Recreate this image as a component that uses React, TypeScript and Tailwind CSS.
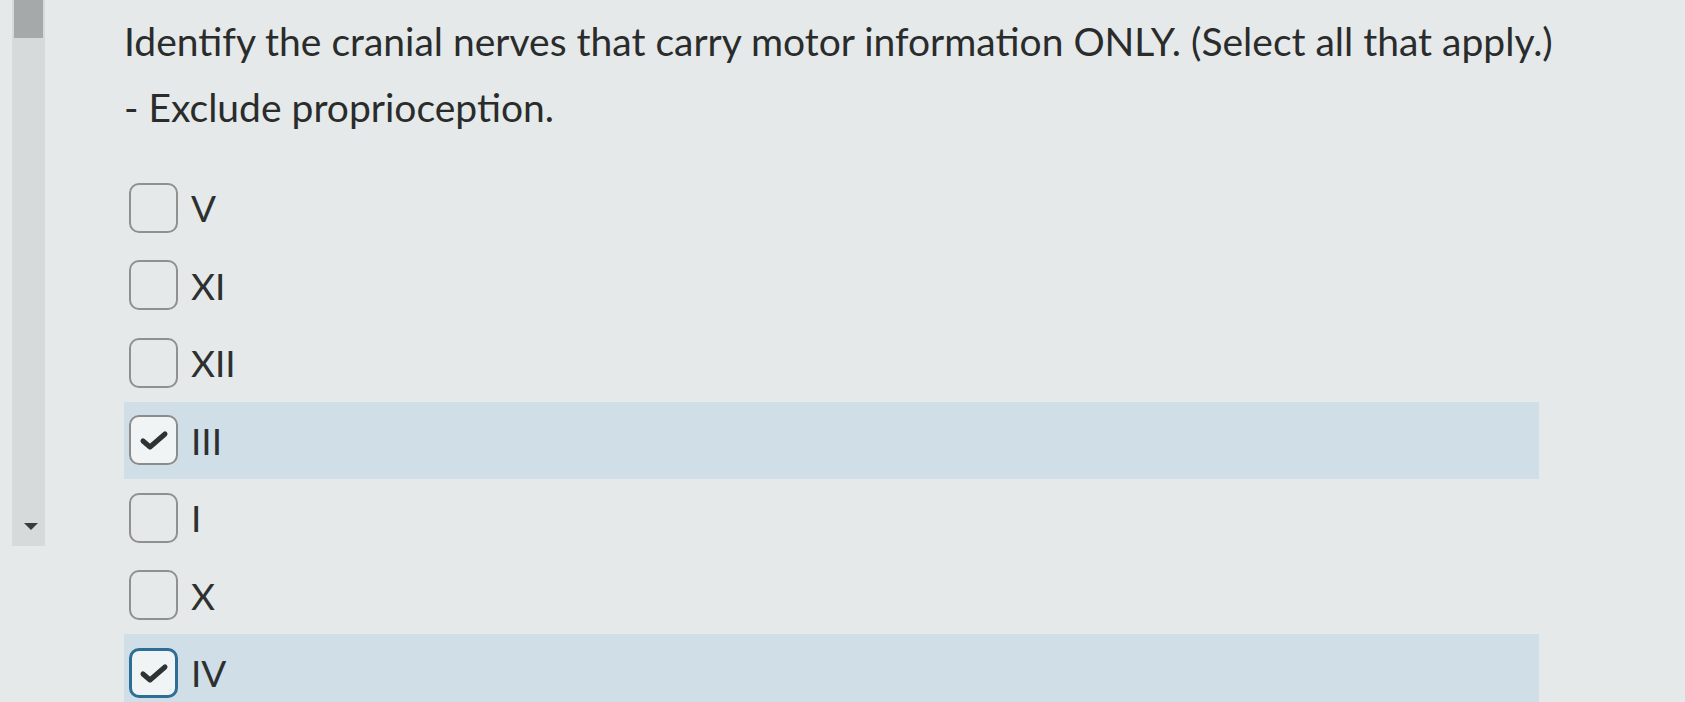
import React from "react";

type Choice = { label: string; checked: boolean; focused?: boolean };

const choices: Choice[] = [
  { label: "V", checked: false },
  { label: "XI", checked: false },
  { label: "XII", checked: false },
  { label: "III", checked: true },
  { label: "I", checked: false },
  { label: "X", checked: false },
  { label: "IV", checked: true, focused: true },
];

function Box({ checked, focused }: { checked: boolean; focused?: boolean }) {
  const border = focused
    ? "border-[3px] border-[#2c6e96] bg-[#f1f4f5]"
    : checked
    ? "border-2 border-[#8b8d8d] bg-[#f1f4f5]"
    : "border-2 border-[#8f9191]";
  return (
    <span
      className={`flex h-[50px] w-[49px] shrink-0 items-center justify-center rounded-[10px] ${border}`}
    >
      {checked && (
        <svg width="34" height="26" viewBox="0 0 34 26" fill="none">
          <path
            d="M6 14 L13 20 L28 7"
            stroke="#2f3233"
            strokeWidth="5"
            strokeLinecap="round"
            strokeLinejoin="round"
          />
        </svg>
      )}
    </span>
  );
}

export default function App() {
  return (
    <div
      className="flex h-[702px] w-[1685px] overflow-hidden bg-[#e5e9e9] text-[#2a2c2c]"
      style={{ fontFamily: "Lato, 'Open Sans', sans-serif" }}
    >
      {/* left scroll rail */}
      <div className="ml-[12px] flex h-[546px] w-[33px] shrink-0 flex-col items-center bg-[#d6dada]">
        <div className="h-[38px] w-[29px] bg-[#a6a9a9]" />
        <div className="flex-1" />
        <div className="mb-[16px] ml-[4px] h-0 w-0 border-x-[7px] border-t-[7px] border-x-transparent border-t-[#3a3c3c]" />
      </div>

      <div className="flex flex-1 flex-col pl-[79px]">
        <h1 className="pt-[8px] text-[39px] font-normal leading-[66px]">
          Identify the cranial nerves that carry motor information ONLY. (Select all that apply.)
          <br />- Exclude proprioception.
        </h1>

        <div className="mt-[29px] flex w-[1415px] flex-col">
          {choices.map((c) => (
            <label
              key={c.label}
              className={`flex h-[77.5px] items-center gap-[13px] pl-[5px] ${
                c.checked ? "bg-[#cfdee7]" : ""
              }`}
            >
              <Box checked={c.checked} focused={c.focused} />
              <span className="text-[37px] leading-none text-[#2e3030]">{c.label}</span>
            </label>
          ))}
        </div>
      </div>
    </div>
  );
}
